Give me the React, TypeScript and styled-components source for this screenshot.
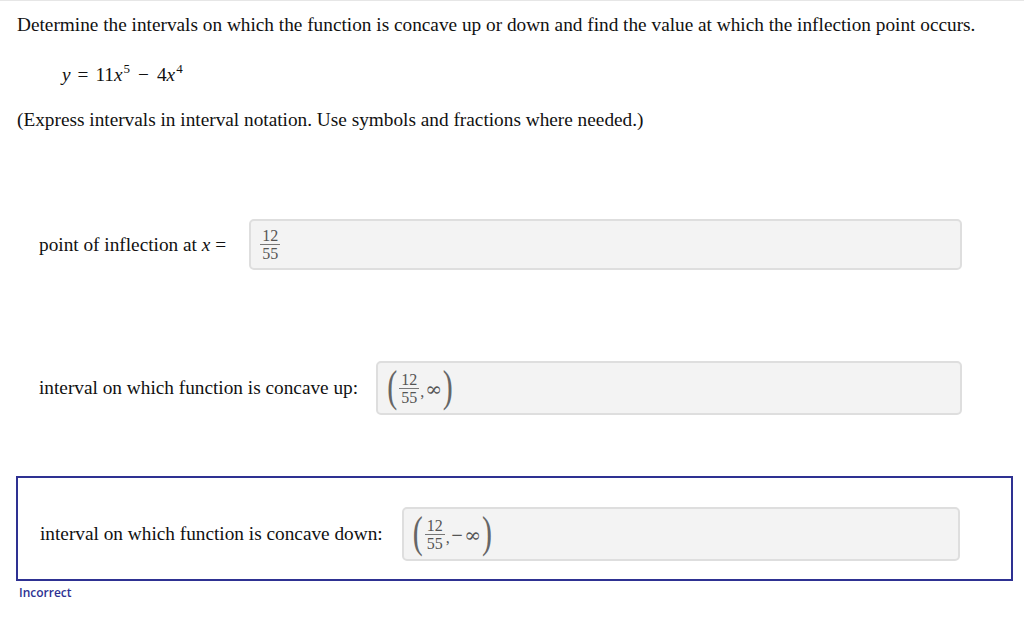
import React from "react";
import styled, { createGlobalStyle } from "styled-components";

const Global = createGlobalStyle`
  html, body { margin: 0; padding: 0; background: #fff; }
  body { font-family: "Liberation Serif", "Times New Roman", serif; color: #111; }
`;

const Page = styled.div`
  border-top: 1px solid #e6e6e6;
  display: flex;
  flex-direction: column;
`;

const Para = styled.p<{ $top: number; $left?: number }>`
  margin: ${(p) => p.$top}px 0 0 ${(p) => p.$left ?? 17}px;
  font-size: 19.3px;
  line-height: 22px;
  white-space: nowrap;
`;

const I = styled.i`
  font-style: italic;
`;

const Op = styled.span<{ $m?: number }>`
  margin: 0 ${(p) => p.$m ?? 5}px;
`;

const Sup = styled.sup`
  font-size: 13px;
  vertical-align: 8px;
  line-height: 0;
  margin-left: 1px;
`;

const Row = styled.div<{ $top: number; $left: number; $right: number }>`
  display: flex;
  align-items: center;
  margin: ${(p) => p.$top}px ${(p) => p.$right}px 0 ${(p) => p.$left}px;
`;

const Label = styled.div<{ $gap: number }>`
  font-size: 19.3px;
  line-height: 22px;
  margin-right: ${(p) => p.$gap}px;
  white-space: nowrap;
`;

const AnswerBox = styled.div<{ $h: number }>`
  flex: 1;
  height: ${(p) => p.$h}px;
  box-sizing: border-box;
  border: 2px solid #dedede;
  border-radius: 5px;
  background: #f3f3f3;
  display: flex;
  align-items: center;
  padding-left: 8px;
  color: #555;
  font-family: "Liberation Serif", "Times New Roman", serif;
  overflow: hidden;
`;

const Frac = styled.span`
  display: inline-flex;
  flex-direction: column;
  align-items: center;
  font-family: "Liberation Serif", "Times New Roman", serif;
  font-size: 16px;
  line-height: 15px;
  margin: 0 1px;
`;

const Num = styled.span`
  padding: 0 2px 1px;
  border-bottom: 1px solid #777;
`;

const Den = styled.span`
  padding: 1px 2px 0;
`;

const Paren = styled.span`
  font-family: "Liberation Serif", "Times New Roman", serif;
  font-size: 30px;
  line-height: 30px;
  color: #666;
  transform: scaleY(1.45);
  display: inline-block;
  margin: -5px 1px 0;
`;

const Tail = styled.span`
  display: inline-flex;
  align-items: center;
  font-family: "Liberation Serif", serif;
  font-size: 16px;
  line-height: 16px;
  margin-top: 2px;
`;

const Comma = styled.span`
  margin: 6px 1px 0 0;
`;

const Inf = styled.span`
  font-family: "DejaVu Serif", serif;
  font-size: 20px;
  line-height: 16px;
`;

const Minus = styled.span`
  font-family: "DejaVu Sans", sans-serif;
  font-size: 15px;
  margin-right: 1px;
`;

const Focus = styled.div`
  margin: 61px 11px 0 16px;
  border: 2px solid #2e3192;
  height: 105px;
  box-sizing: border-box;
  display: flex;
  flex-direction: column;
`;

const Status = styled.div`
  margin: 3px 0 0 19px;
  font-family: "Open Sans", sans-serif;
  font-weight: 600;
  font-size: 12px;
  color: #2e3192;
`;

const Fraction = () => (
  <Frac>
    <Num>12</Num>
    <Den>55</Den>
  </Frac>
);

export default function App() {
  return (
    <Page>
      <Global />
      <Para $top={13}>
        Determine the intervals on which the function is concave up or down and find the value at which the inflection point occurs.
      </Para>
      <Para $top={28} $left={62}>
        <I>y</I>
        <Op $m={7}>=</Op>11<I>x</I>
        <Sup>5</Sup>
        <Op $m={8}>−</Op>4<I>x</I>
        <Sup>4</Sup>
      </Para>
      <Para $top={23}>(Express intervals in interval notation. Use symbols and fractions where needed.)</Para>
      <Row $top={88} $left={39} $right={62}>
        <Label $gap={18}>
          point of inflection at <I>x</I>
          <Op>=</Op>
        </Label>
        <AnswerBox $h={51}>
          <Fraction />
        </AnswerBox>
      </Row>
      <Row $top={91} $left={39} $right={62}>
        <Label $gap={18}>interval on which function is concave up:</Label>
        <AnswerBox $h={54}>
          <Paren>(</Paren>
          <Fraction />
          <Tail>
            <Comma>,</Comma>
            <Inf>∞</Inf>
          </Tail>
          <Paren>)</Paren>
        </AnswerBox>
      </Row>
      <Focus>
        <Row $top={29} $left={22} $right={51}>
          <Label $gap={19}>interval on which function is concave down:</Label>
          <AnswerBox $h={54}>
            <Paren>(</Paren>
            <Fraction />
            <Tail>
              <Comma>,</Comma>
              <Minus>−</Minus>
              <Inf>∞</Inf>
            </Tail>
            <Paren>)</Paren>
          </AnswerBox>
        </Row>
      </Focus>
      <Status>Incorrect</Status>
    </Page>
  );
}
